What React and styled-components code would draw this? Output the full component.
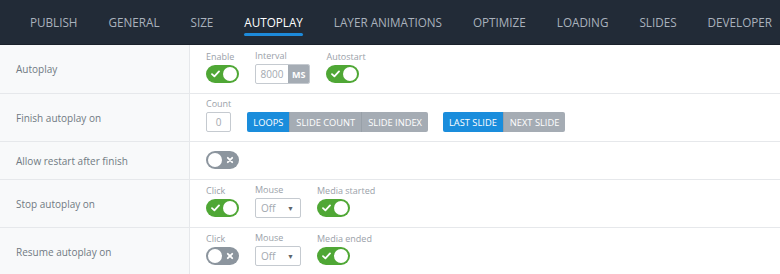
import React from 'react';
import styled, { createGlobalStyle } from 'styled-components';

const GlobalStyle = createGlobalStyle`
  html, body {
    margin: 0;
    padding: 0;
    background: #ffffff;
  }
  body {
    font-family: 'Open Sans', 'Liberation Sans', sans-serif;
  }
`;

const Page = styled.div`
  width: 780px;
  height: 274px;
  overflow: hidden;
  background: #ffffff;
`;

const TabBar = styled.nav`
  background: #222b37;
  height: 45px;
  display: flex;
  align-items: stretch;
  padding-left: 30px;
  gap: 31px;
  border-bottom: 1px solid #1a212b;
  box-sizing: border-box;
`;

const Tab = styled.div`
  position: relative;
  display: flex;
  align-items: center;
  font-size: 11.7px;
  font-weight: 500;
  text-transform: uppercase;
  white-space: nowrap;
  color: ${(p) => (p.$active ? '#ffffff' : '#aab2bd')};

  &::after {
    content: '';
    display: ${(p) => (p.$active ? 'block' : 'none')};
    position: absolute;
    left: 0;
    right: 0;
    bottom: 8px;
    height: 3px;
    border-radius: 2px;
    background: #1d8adb;
  }
`;

const Table = styled.div`
  display: grid;
  grid-template-columns: 190px 1fr;
`;

const Label = styled.div`
  background: #f8f9fa;
  border-right: 1px solid #e6e8eb;
  border-bottom: 1px solid #e6e8eb;
  height: ${(p) => p.$h}px;
  box-sizing: border-box;
  display: flex;
  align-items: center;
  padding-left: 16px;
  font-size: 10px;
  color: #707983;
`;

const Cell = styled.div`
  border-bottom: 1px solid #e6e8eb;
  height: ${(p) => p.$h}px;
  box-sizing: border-box;
  display: flex;
  align-items: flex-end;
  padding: 0 0 9px 16px;
  gap: 16px;
`;

const Field = styled.div`
  display: flex;
  flex-direction: column;
  gap: 2px;
`;

const Caption = styled.div`
  font-size: 9px;
  color: #9aa1a9;
  line-height: 12px;
`;

const ToggleBody = styled.div`
  position: relative;
  width: 33px;
  height: 18px;
  border-radius: 9px;
  background: ${(p) => (p.$on ? '#4fa735' : '#8c959e')};
  margin-bottom: 1px;
`;

const Knob = styled.div`
  position: absolute;
  top: 2px;
  ${(p) => (p.$on ? 'right: 2px;' : 'left: 2px;')}
  width: 14px;
  height: 14px;
  border-radius: 50%;
  background: #ffffff;
`;

const Mark = styled.svg`
  position: absolute;
  top: 5px;
  ${(p) => (p.$on ? 'left: 5px;' : 'right: 5px;')}
`;

const Toggle = ({ on }) => (
  <ToggleBody $on={on}>
    <Knob $on={on} />
    {on ? (
      <Mark $on width="9" height="8" viewBox="0 0 9 8">
        <path d="M1 4.2 L3.4 6.4 L8 1.4" fill="none" stroke="#fff" strokeWidth="1.8" strokeLinecap="round" strokeLinejoin="round" />
      </Mark>
    ) : (
      <Mark width="8" height="8" viewBox="0 0 8 8">
        <path d="M1.8 1.8 L6.2 6.2 M6.2 1.8 L1.8 6.2" fill="none" stroke="#fff" strokeWidth="1.8" strokeLinecap="round" />
      </Mark>
    )}
  </ToggleBody>
);

const InputBox = styled.div`
  display: flex;
  height: 20px;
  width: ${(p) => (p.$w ? `${p.$w}px` : 'auto')};
  box-sizing: border-box;
  border: 1px solid #c5cad0;
  border-radius: 2px;
  overflow: hidden;
  background: #fff;
`;

const InputText = styled.div`
  width: ${(p) => p.$w}px;
  display: flex;
  align-items: center;
  justify-content: ${(p) => (p.$left ? 'flex-start' : 'center')};
  padding-left: ${(p) => (p.$left ? '5px' : '0')};
  box-sizing: border-box;
  font-size: 10px;
  color: #a3a9b0;
`;

const Unit = styled.div`
  background: #a5acb4;
  color: #fff;
  font-size: 9px;
  font-weight: 700;
  display: flex;
  align-items: center;
  padding: 0 4px;
`;

const Caret = styled.span`
  margin-left: auto;
  margin-right: 6px;
  font-size: 7px;
  color: #5d646b;
  align-self: center;
`;

const Group = styled.div`
  display: flex;
  height: 20px;
  border-radius: 2px;
  overflow: hidden;
`;

const Seg = styled.div`
  display: flex;
  align-items: center;
  padding: 0 6px;
  font-size: 9.3px;
  font-weight: 500;
  color: #fff;
  white-space: nowrap;
  background: ${(p) => (p.$active ? '#1a8ddc' : '#a5acb4')};
  & + & {
    border-left: 1px solid ${(p) => (p.$active ? '#1a8ddc' : '#98a0a8')};
  }
`;

const Groups = styled.div`
  display: flex;
  gap: 15px;
`;

const Select = () => (
  <InputBox $w={46}>
    <InputText $w={24} $left>Off</InputText>
    <Caret>▼</Caret>
  </InputBox>
);

const tabs = ['Publish', 'General', 'Size', 'Autoplay', 'Layer animations', 'Optimize', 'Loading', 'Slides', 'Developer'];

export default function App() {
  return (
    <Page>
      <GlobalStyle />
      <TabBar>
        {tabs.map((t) => (
          <Tab key={t} $active={t === 'Autoplay'}>{t}</Tab>
        ))}
      </TabBar>

      <Table>
        <Label $h={49}>Autoplay</Label>
        <Cell $h={49}>
          <Field>
            <Caption>Enable</Caption>
            <Toggle on />
          </Field>
          <Field>
            <Caption>Interval</Caption>
            <InputBox>
              <InputText $w={32}>8000</InputText>
              <Unit>MS</Unit>
            </InputBox>
          </Field>
          <Field>
            <Caption>Autostart</Caption>
            <Toggle on />
          </Field>
        </Cell>

        <Label $h={48}>Finish autoplay on</Label>
        <Cell $h={48}>
          <Field>
            <Caption>Count</Caption>
            <InputBox>
              <InputText $w={23}>0</InputText>
            </InputBox>
          </Field>
          <Groups>
            <Group>
              <Seg $active>LOOPS</Seg>
              <Seg>SLIDE COUNT</Seg>
              <Seg>SLIDE INDEX</Seg>
            </Group>
            <Group>
              <Seg $active>LAST SLIDE</Seg>
              <Seg>NEXT SLIDE</Seg>
            </Group>
          </Groups>
        </Cell>

        <Label $h={38}>Allow restart after finish</Label>
        <Cell $h={38}>
          <Toggle on={false} />
        </Cell>

        <Label $h={48}>Stop autoplay on</Label>
        <Cell $h={48}>
          <Field>
            <Caption>Click</Caption>
            <Toggle on />
          </Field>
          <Field>
            <Caption>Mouse</Caption>
            <Select />
          </Field>
          <Field>
            <Caption>Media started</Caption>
            <Toggle on />
          </Field>
        </Cell>

        <Label $h={48}>Resume autoplay on</Label>
        <Cell $h={48}>
          <Field>
            <Caption>Click</Caption>
            <Toggle on={false} />
          </Field>
          <Field>
            <Caption>Mouse</Caption>
            <Select />
          </Field>
          <Field>
            <Caption>Media ended</Caption>
            <Toggle on />
          </Field>
        </Cell>
      </Table>
    </Page>
  );
}
